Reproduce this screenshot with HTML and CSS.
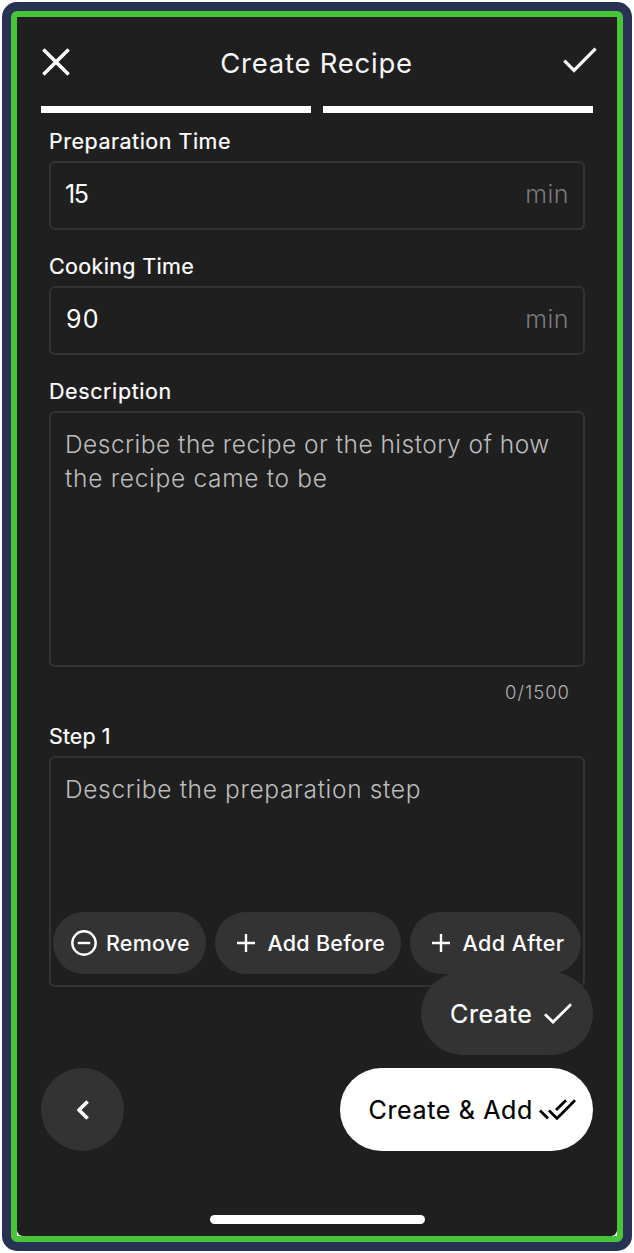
FILE: index.html
```html
<!DOCTYPE html>
<html lang="en">
<head>
<meta charset="utf-8">
<title>Create Recipe</title>
<link rel="stylesheet" href="styles.css">
</head>
<body>
<div class="frame">
  <div class="bezel">
    <main class="screen">
      <header class="header">
        <svg class="icon-close" viewBox="0 0 28 28"><path d="M1.4 1.4 26.6 26.6M26.6 1.4 1.4 26.6"/></svg>
        <h1 class="title">Create Recipe</h1>
        <svg class="icon-done" viewBox="0 0 34 26"><path d="M1.3 13.6 11 23.3 32.6 1.7"/></svg>
      </header>
      <div class="progress"><span></span><span></span></div>
      <form class="form">
        <div class="label label-prep">Preparation Time</div>
        <div class="field"><span class="value value-prep">15</span><span class="unit">min</span></div>
        <div class="label label-cook spaced">Cooking Time</div>
        <div class="field"><span class="value value-cook">90</span><span class="unit">min</span></div>
        <div class="label label-desc spaced">Description</div>
        <div class="area area-desc"><p class="hint"><span class="hint-first">Describe the recipe or the history of how</span><br><span class="hint-second">the recipe came to be</span></p></div>
        <div class="counter">0/1500</div>
        <div class="label label-step">Step 1</div>
        <div class="area area-step">
          <p class="hint hint-step">Describe the preparation step</p>
          <div class="step-actions">
            <div class="chip chip-remove">
              <svg class="icon-minus" viewBox="0 0 26 26"><circle cx="13" cy="13" r="11.7"/><path d="M6.8 13h12.4"/></svg>
              <span>Remove</span>
            </div>
            <div class="chip chip-before">
              <svg class="icon-plus" viewBox="0 0 18 18"><path d="M9 0v18M0 9h18"/></svg>
              <span>Add Before</span>
            </div>
            <div class="chip chip-after">
              <svg class="icon-plus" viewBox="0 0 18 18"><path d="M9 0v18M0 9h18"/></svg>
              <span>Add After</span>
            </div>
          </div>
        </div>
      </form>
      <div class="floating">
        <div class="back"><svg class="icon-back" viewBox="0 0 12 20"><path d="M10.6 1.4 2 10l8.6 8.6"/></svg></div>
        <div class="submit">
          <div class="pill pill-create">
            <span>Create</span>
            <svg class="icon-check" viewBox="0 0 28 21"><path d="M1 11.2 9 19.1 27 1.3"/></svg>
          </div>
          <div class="pill pill-add">
            <span>Create &amp; Add</span>
            <svg class="icon-double" viewBox="0 0 37 21"><path d="M1 11.6 9 19.6M10 11.6l8 7.8L36 1.2M17 10.9 27 1.2"/></svg>
          </div>
        </div>
      </div>
      <div class="home-bar"></div>
    </main>
  </div>
</div>
</body>
</html>
```
FILE: styles.css
```css
* { box-sizing: border-box; }
body {
  margin: 0;
  padding: 2px;
  background: #fff;
  font-family: Inter, "Liberation Sans", sans-serif;
  color: #fff;
}
svg { display: block; fill: none; stroke: currentColor; flex: none; }
span { white-space: nowrap; }
.frame {
  width: 630px;
  height: 1249px;
  padding: 9px;
  border-radius: 15px;
  background: #283252;
}
.bezel {
  height: 1231px;
  border: 6px solid #49c539;
  border-radius: 6px;
  background: #fff;
}
.screen {
  position: relative;
  height: 1219px;
  padding: 0 24px;
  border-radius: 0 0 6px 6px;
  background: #1f1f1f;
}
.header {
  display: flex;
  align-items: center;
  justify-content: space-between;
  height: 89px;
  padding-top: 2px;
  margin-right: -4px;
}
.icon-close { width: 28px; height: 28px; margin: -1px 0 0 1px; stroke-width: 3.5; }
.icon-done { width: 34px; height: 26px; stroke-width: 3.3; color: #f3f3f1; margin-top: -5px; }
.title { margin: 0; font-size: 27.5px; font-weight: 400; letter-spacing: 0.75px; color: #f5f5f5; }
.progress { display: flex; gap: 12.5px; width: 552px; height: 7px; }
.progress span { flex: 1; background: #fff; }
.form { padding: 8px; }
.label { height: 40px; line-height: 40px; font-size: 21.5px; font-weight: 400; letter-spacing: 0.5px; -webkit-text-stroke: 0.2px #fff; }
.label-cook { letter-spacing: 0.35px; }
.label-desc { letter-spacing: 0.6px; }
.label-step { letter-spacing: 0.1px; }
.spaced { margin-top: 16px; }
.field {
  display: flex;
  align-items: center;
  justify-content: space-between;
  width: 536px;
  height: 69px;
  padding: 0 14px 3px;
  border: 2px solid #333;
  border-radius: 6px;
  font-size: 25px;
}
.value-prep { letter-spacing: -1.5px; }
.value-cook { padding-left: 1px; letter-spacing: 1.2px; }
.unit { color: #7a7a7a; font-weight: 300; letter-spacing: 0.5px; }
.area {
  display: flex;
  flex-direction: column;
  justify-content: space-between;
  width: 536px;
  border: 2px solid #333;
  border-radius: 6px;
}
.area-desc { height: 256px; }
.area-step { height: 231px; }
.hint { margin: 0; padding: 14px 14px 0; font-size: 24.5px; font-weight: 300; line-height: 34px; color: #bcbcbc; letter-spacing: 0.48px; }
.hint-second { letter-spacing: 0.7px; }
.hint-step { letter-spacing: 0.65px; }
.counter { height: 49px; line-height: 50px; padding-right: 15px; text-align: right; font-size: 18.5px; font-weight: 300; letter-spacing: 1px; color: #b0b0b0; }
.step-actions { display: flex; gap: 9px; padding: 0 2px 11px; }
.chip {
  display: flex;
  align-items: center;
  height: 62.5px;
  border-radius: 32px;
  background: #333;
  font-size: 21.5px;
  font-weight: 500;
}
.chip-remove { width: 152.5px; padding-left: 18px; gap: 9px; letter-spacing: 0.2px; }
.chip-before { width: 186.5px; padding-left: 22px; gap: 13px; letter-spacing: 0.25px; }
.chip-after { width: 170.5px; padding-left: 21.5px; gap: 13px; letter-spacing: 0.45px; }
.icon-minus { width: 26px; height: 26px; stroke-width: 2.4; }
.icon-plus { width: 18px; height: 18px; stroke-width: 2.4; }
.floating {
  position: absolute;
  left: 24px;
  right: 24px;
  bottom: 85px;
  display: flex;
  align-items: flex-end;
  justify-content: space-between;
}
.back {
  display: flex;
  align-items: center;
  justify-content: center;
  width: 83px;
  height: 83px;
  border-radius: 50%;
  background: #333;
}
.icon-back { width: 12px; height: 20px; stroke-width: 3.6; }
.submit { display: flex; flex-direction: column; align-items: flex-end; gap: 13px; }
.pill {
  display: flex;
  align-items: center;
  justify-content: space-between;
  height: 83px;
  border-radius: 42px;
  font-size: 25px;
  font-weight: 400;
}
.pill-create { width: 172px; padding: 0 21px 0 29px; letter-spacing: 0.65px; background: #333; -webkit-text-stroke: 0.2px #fff; }
.pill-add { width: 253px; padding: 0 17px 0 28.5px; letter-spacing: 0.65px; background: #fff; color: #000; -webkit-text-stroke: 0.2px #000; }
.icon-check { width: 28px; height: 21px; stroke-width: 2.8; }
.icon-double { width: 37px; height: 21px; stroke-width: 2.8; }
.home-bar {
  position: absolute;
  left: 193px;
  bottom: 12.5px;
  width: 215px;
  height: 8.5px;
  border-radius: 5px;
  background: #fff;
}
```
